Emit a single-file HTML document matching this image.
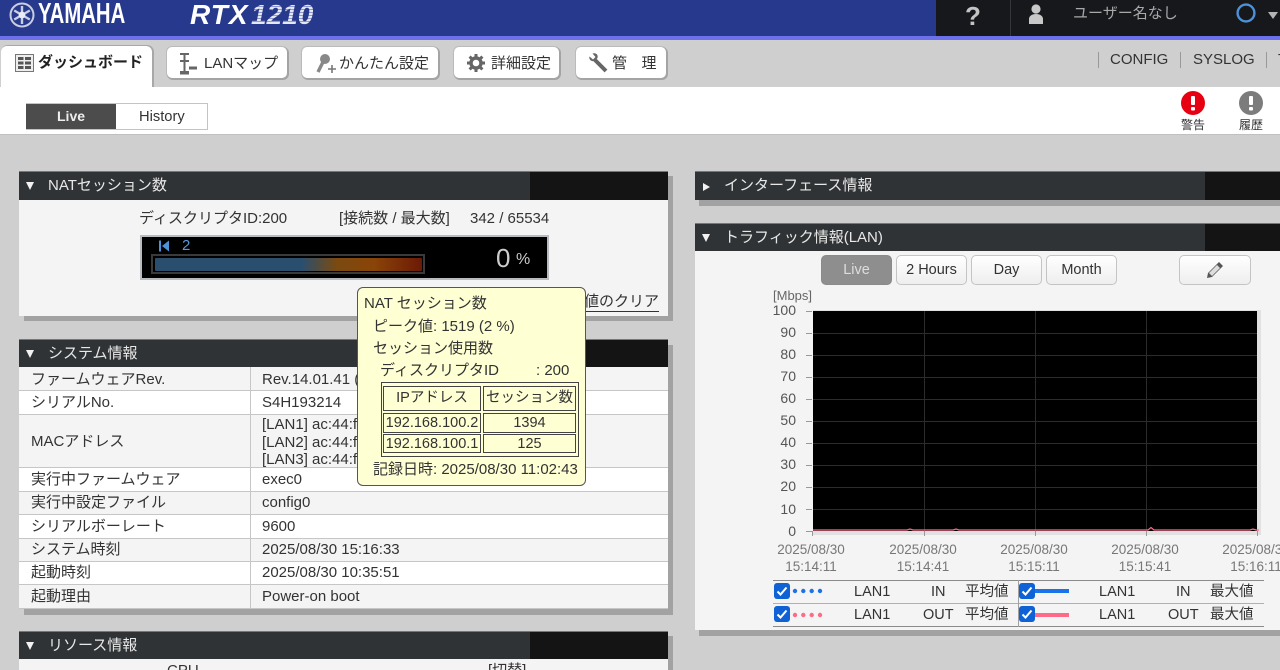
<!DOCTYPE html>
<html lang="ja"><head><meta charset="utf-8"><title>RTX1210</title>
<style>
html,body{margin:0;padding:0}
body{width:1280px;height:670px;overflow:hidden;position:relative;background:#cfcfcf;font-family:"Liberation Sans","Noto Sans CJK JP",sans-serif;font-size:15px;color:#333}
div,span.a,svg.a{position:absolute}
.t{position:absolute;white-space:nowrap;line-height:20px;height:20px;margin-top:1px}
.lg{font-size:14.5px}
.tab{position:absolute;top:47px;height:31px;background:#fff;border-radius:5px;box-shadow:1px 1px 0 1px #a4a4a4,0 0 0 1px #bbb}
.ph{position:absolute;height:28px;background:#2f3335;border-top:1px solid #777;box-sizing:border-box}
.ph i{position:absolute;right:0;top:0;bottom:0;background:#141414;display:block}
.ph .t{color:#e8e8e8;font-size:15px;top:3px}
.tri{position:absolute;left:7px;top:10px;width:0;height:0;border-left:4.5px solid transparent;border-right:4.5px solid transparent;border-top:8px solid #f2f2f2}
.row{position:absolute;left:19px;width:649px;box-sizing:border-box;border-bottom:1px solid #c6c6c6}
.row .l{position:absolute;left:12px;top:50%;margin-top:-10px;line-height:20px;white-space:nowrap}
.row .v{position:absolute;left:243px;top:50%;margin-top:-10px;line-height:20px;white-space:nowrap}
.row::before{content:"";position:absolute;left:231px;top:0;bottom:-1px;width:1px;background:#c6c6c6}
.btn{position:absolute;top:255px;height:30px;width:70px;box-sizing:border-box;border:1px solid #c4c4c4;border-radius:5px;background:linear-gradient(#fff,#eee);text-align:center;line-height:29px;color:#333;font-size:14.5px}
.y{position:absolute;right:484px;width:40px;text-align:right;color:#555;font-size:14px;line-height:16px}
.xl{position:absolute;top:541px;width:80px;text-align:center;color:#777;font-size:13.5px;line-height:17px}
.cb{position:absolute;width:16px;height:16px;background:#0f62d6;border-radius:3px}
.cb svg{position:absolute;left:0;top:0}
.ttb{position:absolute;box-sizing:border-box;border:1px solid #444;text-align:center;color:#333;white-space:nowrap;font-size:14.5px;overflow:hidden}
</style></head><body>

<!-- top bar -->
<div style="left:0;top:0;width:1280px;height:36px;background:#27398c"></div>
<div style="left:0;top:36px;width:1280px;height:4px;background:#6c70ea"></div>
<div style="left:936px;top:0;width:344px;height:36px;background:#16181c"></div>
<div style="left:1010px;top:0;width:1px;height:36px;background:#33363a"></div>

<svg class="a" style="left:9px;top:2px" width="26" height="26" viewBox="0 0 26 26"><circle cx="13" cy="13" r="11.5" fill="none" stroke="#c9cde4" stroke-width="2"/><g stroke="#c9cde4" stroke-width="2.4"><path d="M13 4v18M5.2 8.5l15.6 9M20.8 8.5l-15.6 9"/></g><circle cx="13" cy="13" r="3.4" fill="#e8eaf4"/></svg>
<div class="t" style="left:38px;top:-1px;color:#fff;font-weight:bold;font-size:29px;line-height:28px;height:28px;transform:scaleX(.7);transform-origin:0 0">YAMAHA</div>
<div class="t" style="left:190px;top:0;color:#fff;font-weight:bold;font-style:italic;font-size:28px;line-height:28px;height:28px;letter-spacing:1px">RTX</div>
<div class="t" style="left:251px;top:0;font-weight:bold;font-style:italic;font-size:28px;line-height:28px;height:28px;color:transparent;background:repeating-linear-gradient(#e4e7f4 0 2px,#8f99cb 2px 3px);-webkit-background-clip:text;background-clip:text">1210</div>

<div class="t" style="left:965px;top:1px;color:#c4c4c4;font-weight:bold;font-size:26px;line-height:28px;height:28px">?</div>
<svg class="a" style="left:1027px;top:3px" width="18" height="22" viewBox="0 0 18 22"><circle cx="9" cy="6" r="4.6" fill="#c8c8c8"/><path d="M2 21v-5c0-3 3-5 7-5s7 2 7 5v5z" fill="#c8c8c8"/></svg>
<div class="t" style="left:1073px;top:3px;color:#a8a8a8;font-size:15px">ユーザー名なし</div>
<svg class="a" style="left:1235px;top:2px" width="22" height="22"><circle cx="11" cy="11" r="8.4" fill="none" stroke="#4d92d8" stroke-width="2.4"/></svg>
<div style="left:1268px;top:12px;width:0;height:0;border-left:5px solid transparent;border-right:5px solid transparent;border-top:7px solid #b4b4b4"></div>

<!-- tabs -->
<div style="left:1px;top:46px;width:151px;height:41px;background:#fff;border-radius:6px 6px 0 0;box-shadow:1px 0 0 1px #a8a8a8"></div>
<svg class="a" style="left:15px;top:54px" width="19" height="18" viewBox="0 0 19 18"><rect x=".5" y=".5" width="18" height="17" fill="#eee" stroke="#777"/><g fill="#555"><rect x="3" y="3" width="5.5" height="3"/><rect x="10" y="3" width="6" height="3"/><rect x="3" y="7.5" width="5.5" height="3"/><rect x="10" y="7.5" width="6" height="3"/><rect x="3" y="12" width="5.5" height="3"/><rect x="10" y="12" width="6" height="3"/></g></svg>
<div class="t" style="left:38px;top:52px;font-weight:bold;font-size:15px;color:#222">ダッシュボード</div>

<div class="tab" style="left:167px;width:120px"></div>
<svg class="a" style="left:179px;top:52px" width="22" height="24" viewBox="0 0 22 24" fill="none" stroke="#666" stroke-width="2"><path d="M1 2h9M5.5 2v18M1 9h9M1 20h9" /><path d="M1 21h9" stroke-width="3"/><path d="M10 16h8" stroke-width="3"/></svg>
<div class="t" style="left:204px;top:53px">LANマップ</div>

<div class="tab" style="left:302px;width:136px"></div>
<svg class="a" style="left:314px;top:52px" width="24" height="24" viewBox="0 0 24 24"><circle cx="11" cy="7" r="5" fill="#888"/><path d="M9 10l-5 10" stroke="#888" stroke-width="3.4"/><path d="M18 13v8M14 17h8" stroke="#777" stroke-width="1.6"/></svg>
<div class="t" style="left:339px;top:53px">かんたん設定</div>

<div class="tab" style="left:454px;width:105px"></div>
<svg class="a" style="left:467px;top:54px" width="18" height="18" viewBox="0 0 18 18"><circle cx="9" cy="9" r="5" fill="none" stroke="#666" stroke-width="3.4"/><g stroke="#666" stroke-width="3"><path d="M9 0v3.5M9 14.5V18M0 9h3.5M14.500 9H18M2.600 2.600l2.500 2.500M12.900 12.900l2.500 2.500M15.400 2.600l-2.500 2.500M5.100 12.900l-2.500 2.500"/></g></svg>
<div class="t" style="left:491px;top:53px">詳細設定</div>

<div class="tab" style="left:576px;width:90px"></div>
<svg class="a" style="left:588px;top:53px" width="21" height="21" viewBox="0 0 21 21" fill="none"><path d="M7 7l11 11" stroke="#666" stroke-width="4"/><path d="M1.500 3.500l3.500 3 2.500-2.500-3-3.500c3-1 6 1 5 4.500l-3 3c-3 1-6-1.500-5-4.500z" fill="#666"/></svg>
<div class="t" style="left:612px;top:53px;letter-spacing:.5px">管&nbsp;&nbsp;&nbsp;理</div>

<!-- top right links -->
<div style="left:1098px;top:52px;width:1px;height:16px;background:#999"></div>
<div class="t" style="left:1110px;top:49px">CONFIG</div>
<div style="left:1180px;top:52px;width:1px;height:16px;background:#999"></div>
<div class="t" style="left:1193px;top:49px">SYSLOG</div>
<div style="left:1266px;top:52px;width:1px;height:16px;background:#999"></div>
<div class="t" style="left:1278px;top:49px">TECH</div>

<!-- white strip -->
<div style="left:0;top:87px;width:1280px;height:47px;background:#fff"></div>
<div style="left:0;top:134px;width:1280px;height:1px;background:#c0c0c0"></div>
<div style="left:26px;top:103px;width:182px;height:27px;box-sizing:border-box;border:1px solid #c4c4c4;background:#fff"></div>
<div style="left:26px;top:104px;width:90px;height:25px;background:#4c4c4c"></div>
<div class="t" style="left:57px;top:105px;color:#eee;font-weight:bold;font-size:14px">Live</div>
<div class="t" style="left:139px;top:106px;font-size:14.7px">History</div>

<svg class="a" style="left:1181px;top:91px" width="24" height="24"><circle cx="12" cy="12" r="12" fill="#e60012"/><rect x="10" y="5" width="4" height="9" rx="1" fill="#fff"/><rect x="10" y="16" width="4" height="3.500" rx="1" fill="#fff"/></svg>
<div class="t" style="left:1181px;top:114px;font-size:12px">警告</div>
<svg class="a" style="left:1239px;top:91px" width="24" height="24"><circle cx="12" cy="12" r="12" fill="#7c7c7c"/><rect x="10" y="5" width="4" height="9" rx="1" fill="#fff"/><rect x="10" y="16" width="4" height="3.500" rx="1" fill="#fff"/></svg>
<div class="t" style="left:1239px;top:114px;font-size:12px">履歴</div>

<!-- NAT panel -->
<div style="left:24px;top:176px;width:649px;height:145px;background:#a2a2a2"></div>
<div style="left:19px;top:172px;width:649px;height:144px;background:#f4f4f4"></div>
<div class="ph" style="left:19px;top:171px;width:649px;height:29px"><i style="width:138px"></i><span class="tri"></span><span class="t" style="left:29px;top:3px">NATセッション数</span></div>
<div class="t" style="left:139px;top:208px">ディスクリプタID:200</div>
<div class="t" style="left:339px;top:208px">[接続数 / 最大数]</div>
<div class="t" style="left:470px;top:208px">342 / 65534</div>
<div style="left:140px;top:235px;width:409px;height:45px;box-sizing:border-box;background:#000;border:2px solid #b8bcc0"></div>
<svg class="a" style="left:158px;top:240px" width="12" height="12"><rect x="1" y="0.500" width="2" height="11" fill="#4d92d8"/><path d="M11 0.500v11L4 6z" fill="#4d92d8"/></svg>
<div class="t" style="left:182px;top:235px;color:#5a9ad8;font-size:15px">2</div>
<div style="left:151px;top:254px;width:274px;height:20px;box-sizing:border-box;border:2px solid #3a3a3a"></div>
<div style="left:155px;top:258px;width:267px;height:13px;background:linear-gradient(90deg,#2a4e6e 0,#2a4e6e 55%,#7a4a10 68%,#8a4408 82%,#6c1a06 100%);border-radius:1px"></div>
<div class="t" style="left:496px;top:242px;color:#ccc;font-size:26px;line-height:30px;height:30px">0</div>
<div class="t" style="left:516px;top:249px;color:#ccc;font-size:16px">%</div>
<div class="t" style="left:584px;top:291px;border-bottom:1px solid #333;height:19px">値のクリア</div>

<!-- system panel -->
<div style="left:24px;top:345px;width:649px;height:270px;background:#a2a2a2"></div>
<div class="ph" style="left:19px;top:339px;width:649px;height:28px"><i style="width:138px"></i><span class="tri"></span><span class="t" style="left:29px;top:3px">システム情報</span></div>
<div class="row" style="top:367px;height:24px;background:#f4f4f4"><span class="l" style="margin-top:-9px">ファームウェアRev.</span><span class="v" style="margin-top:-9px">Rev.14.01.41 (Thu Jun 12 19:51:42 2025)</span></div>
<div class="row" style="top:391px;height:24px;background:#fff"><span class="l">シリアルNo.</span><span class="v">S4H193214</span></div>
<div class="row" style="top:415px;height:53px;background:#f4f4f4"><span class="l" style="margin-top:-9px">MACアドレス</span><span class="v" style="margin-top:-25px;line-height:17.500px">[LAN1] ac:44:f2:00:00:00<br>[LAN2] ac:44:f2:00:00:01<br>[LAN3] ac:44:f2:00:00:02</span></div>
<div class="row" style="top:468px;height:24px;background:#fff"><span class="l">実行中ファームウェア</span><span class="v">exec0</span></div>
<div class="row" style="top:492px;height:23px;background:#f4f4f4"><span class="l">実行中設定ファイル</span><span class="v">config0</span></div>
<div class="row" style="top:515px;height:24px;background:#fff"><span class="l">シリアルボーレート</span><span class="v">9600</span></div>
<div class="row" style="top:539px;height:23px;background:#f4f4f4"><span class="l">システム時刻</span><span class="v">2025/08/30 15:16:33</span></div>
<div class="row" style="top:562px;height:23px;background:#fff"><span class="l">起動時刻</span><span class="v">2025/08/30 10:35:51</span></div>
<div class="row" style="top:585px;height:24px;background:#f4f4f4"><span class="l">起動理由</span><span class="v">Power-on boot</span></div>

<!-- resource panel -->
<div style="left:24px;top:636px;width:649px;height:34px;background:#a2a2a2"></div>
<div style="left:19px;top:659px;width:649px;height:11px;background:#f4f4f4;overflow:hidden"><span class="t" style="left:148px;top:1px">CPU</span><span class="t" style="left:469px;top:1px">[切替]</span></div>
<div class="ph" style="left:19px;top:631px;width:649px;height:28px"><i style="width:138px"></i><span class="tri"></span><span class="t" style="left:29px;top:3px">リソース情報</span></div>

<!-- tooltip -->
<div style="left:357px;top:287px;width:229px;height:199px;box-sizing:border-box;background:#ffffd4;border:1px solid #555;border-radius:6px"></div>
<div class="t" style="left:364px;top:293px">NAT セッション数</div>
<div class="t" style="left:373px;top:316px">ピーク値: 1519 (2 %)</div>
<div class="t" style="left:373px;top:338px">セッション使用数</div>
<div class="t" style="left:380px;top:360px">ディスクリプタID</div>
<div class="t" style="left:536px;top:360px">: 200</div>
<div style="left:381px;top:382px;width:198px;height:75px;box-sizing:border-box;border:1px solid #444"></div>
<div class="ttb" style="left:383px;top:386px;width:98px;height:25px;line-height:23px">IPアドレス</div>
<div class="ttb" style="left:483px;top:386px;width:93px;height:25px;line-height:23px">セッション数</div>
<div class="ttb" style="left:383px;top:413px;width:98px;height:20px;line-height:18px">192.168.100.2</div>
<div class="ttb" style="left:483px;top:413px;width:93px;height:20px;line-height:18px">1394</div>
<div class="ttb" style="left:383px;top:434px;width:98px;height:19px;line-height:18px">192.168.100.1</div>
<div class="ttb" style="left:483px;top:434px;width:93px;height:19px;line-height:18px">125</div>
<div class="t" style="left:373px;top:459px">記録日時: 2025/08/30 11:02:43</div>

<!-- interface panel -->
<div style="left:699px;top:176px;width:581px;height:30px;background:#a2a2a2"></div>
<div class="ph" style="left:695px;top:171px;width:585px;height:29px"><i style="width:75px"></i><span style="position:absolute;left:8px;top:11px;width:0;height:0;border-top:4.500px solid transparent;border-bottom:4.500px solid transparent;border-left:7px solid #f2f2f2"></span><span class="t" style="left:29px;top:3px">インターフェース情報</span></div>

<!-- traffic panel -->
<div style="left:699px;top:230px;width:581px;height:406px;background:#a2a2a2"></div>
<div style="left:695px;top:251px;width:585px;height:379px;background:#f4f4f4"></div>
<div class="ph" style="left:695px;top:223px;width:585px;height:28px"><i style="width:75px"></i><span class="tri"></span><span class="t" style="left:29px;top:3px">トラフィック情報(LAN)</span></div>

<div class="btn" style="left:821px;width:71px;background:#8e8e8e;border-color:#8a8a8a;color:#ddd">Live</div>
<div class="btn" style="left:896px;width:71px">2 Hours</div>
<div class="btn" style="left:971px;width:71px">Day</div>
<div class="btn" style="left:1046px;width:71px">Month</div>
<div class="btn" style="left:1179px;width:72px"></div>
<svg class="a" style="left:1205px;top:260px" width="20" height="20" viewBox="0 0 20 20"><path d="M14 2l4 4L7 17l-5 1 1-5z" fill="#555"/><path d="M12 5l3 3L7 16l-3-3z" fill="#ddd"/></svg>

<div class="t" style="left:773px;top:285px;color:#666;font-size:13px">[Mbps]</div>
<div class="y" style="top:302px">100</div><div class="y" style="top:324px">90</div><div class="y" style="top:346px">80</div><div class="y" style="top:368px">70</div><div class="y" style="top:390px">60</div><div class="y" style="top:412px">50</div><div class="y" style="top:434px">40</div><div class="y" style="top:456px">30</div><div class="y" style="top:478px">20</div><div class="y" style="top:501px">10</div><div class="y" style="top:523px">0</div>

<svg class="a" style="left:800px;top:305px" width="470" height="235" viewBox="800 305 470 235">
<rect x="813" y="310" width="448" height="225" fill="#d8d8d8" opacity=".7"/>
<rect x="813" y="311" width="444" height="220" fill="#000"/>
<g stroke="#2c2c2c" stroke-width="1"><path d="M813 333.500h444M813 355.500h444M813 377.500h444M813 399.500h444M813 421.500h444M813 443.500h444M813 465.500h444M813 487.500h444M813 509.500h444M924.500 311v220M1035.500 311v220M1146.500 311v220"/></g>
<g stroke="#999" stroke-width="1"><path d="M806 311.500h6M806 333.500h6M806 355.500h6M806 377.500h6M806 399.500h6M806 421.500h6M806 443.500h6M806 465.500h6M806 487.500h6M806 509.500h6M806 531.500h6M812.500 531v5M924.500 531v5M1035.500 531v5M1146.500 531v5M1257.500 531v5"/></g>
<path d="M813 530h94l3-1 3 1h40l3-1 3 1h189l3-2.500 3 2.500h96l3-1 3 1h3" fill="none" stroke="#ff6a86" stroke-width="1.200"/>
</svg>

<div class="xl" style="left:771px">2025/08/30<br>15:14:11</div>
<div class="xl" style="left:883px">2025/08/30<br>15:14:41</div>
<div class="xl" style="left:994px">2025/08/30<br>15:15:11</div>
<div class="xl" style="left:1105px">2025/08/30<br>15:15:41</div>
<div class="xl" style="left:1216px">2025/08/30<br>15:16:11</div>

<!-- legend -->
<div style="left:773px;top:580px;width:491px;height:1px;background:#8a8a8a"></div>
<div style="left:773px;top:603px;width:491px;height:1px;background:#b0b0b0"></div>
<div style="left:773px;top:626px;width:491px;height:1px;background:#8a8a8a"></div>
<div style="left:1018px;top:580px;width:1px;height:47px;background:#a0a0a0"></div>

<div class="cb" style="left:774px;top:583px"><svg width="16" height="16"><path d="M3.500 8.500l3 3 6-7" fill="none" stroke="#fff" stroke-width="2"/></svg></div>
<div class="cb" style="left:774px;top:606px"><svg width="16" height="16"><path d="M3.500 8.500l3 3 6-7" fill="none" stroke="#fff" stroke-width="2"/></svg></div>
<div class="cb" style="left:1019px;top:583px"><svg width="16" height="16"><path d="M3.500 8.500l3 3 6-7" fill="none" stroke="#fff" stroke-width="2"/></svg></div>
<div class="cb" style="left:1019px;top:606px"><svg width="16" height="16"><path d="M3.500 8.500l3 3 6-7" fill="none" stroke="#fff" stroke-width="2"/></svg></div>
<svg class="a" style="left:792px;top:586px" width="32" height="36"><g fill="#1a73e8"><circle cx="3" cy="5" r="2.200"/><circle cx="11.300" cy="5" r="2.200"/><circle cx="19.700" cy="5" r="2.200"/><circle cx="28" cy="5" r="2.200"/></g><g fill="#ff6a86"><circle cx="3" cy="29" r="2.200"/><circle cx="11.300" cy="29" r="2.200"/><circle cx="19.700" cy="29" r="2.200"/><circle cx="28" cy="29" r="2.200"/></g></svg>
<div style="left:1035px;top:589px;width:34px;height:4px;background:#1a73e8"></div>
<div style="left:1035px;top:613px;width:34px;height:4px;background:#ff6a86"></div>

<div class="t lg" style="left:854px;top:581px">LAN1</div><div class="t lg" style="left:931px;top:581px">IN</div><div class="t lg" style="left:965px;top:581px">平均値</div>
<div class="t lg" style="left:854px;top:604px">LAN1</div><div class="t lg" style="left:923px;top:604px">OUT</div><div class="t lg" style="left:965px;top:604px">平均値</div>
<div class="t lg" style="left:1099px;top:581px">LAN1</div><div class="t lg" style="left:1176px;top:581px">IN</div><div class="t lg" style="left:1210px;top:581px">最大値</div>
<div class="t lg" style="left:1099px;top:604px">LAN1</div><div class="t lg" style="left:1168px;top:604px">OUT</div><div class="t lg" style="left:1210px;top:604px">最大値</div>

</body></html>
